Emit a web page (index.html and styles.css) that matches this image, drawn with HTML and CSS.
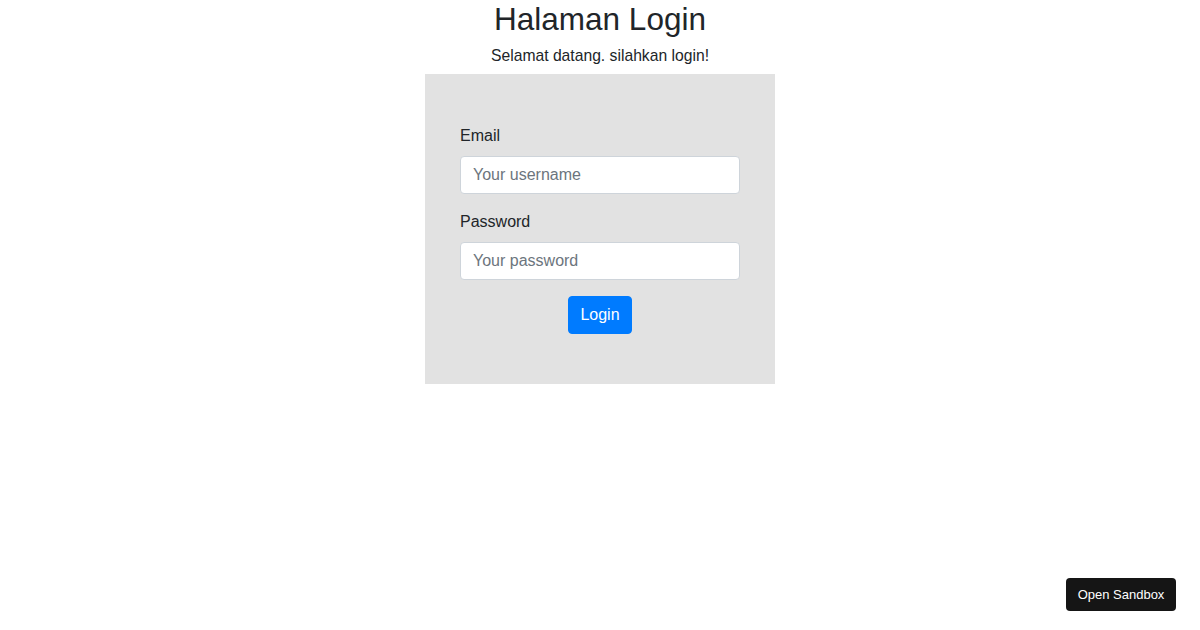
FILE: index.html
```html
<!DOCTYPE html>
<html lang="en">
<head>
  <meta charset="UTF-8" />
  <meta name="viewport" content="width=device-width, initial-scale=1" />
  <title>Halaman Login</title>
  <link rel="stylesheet" href="styles.css">
</head>
<body>
  <div class="login-page">
    <h2 class="login-title">Halaman Login</h2>
    <p class="login-subtitle">Selamat datang. silahkan login!</p>

    <div class="login-box">
      <form>
        <div class="form-group">
          <label for="email">Email</label>
          <input type="text" id="email" class="form-control" placeholder="Your username" />
        </div>
        <div class="form-group">
          <label for="password">Password</label>
          <input type="password" id="password" class="form-control" placeholder="Your password" />
        </div>
        <div class="form-actions">
          <button type="submit" class="btn-login">Login</button>
        </div>
      </form>
    </div>
  </div>

  <a href="#" class="sandbox-btn">Open Sandbox</a>
</body>
</html>
```

FILE: styles.css
```css
* {
  margin: 0;
  padding: 0;
  box-sizing: border-box;
}

body {
  font-family: 'Liberation Sans', Arial, sans-serif;
  font-size: 16px;
  line-height: 1.5;
  color: #212529;
  background-color: #fff;
}

.login-page {
  display: flex;
  flex-direction: column;
  align-items: center;
}

.login-title {
  font-size: 31.5px;
  font-weight: 400;
  line-height: 1.2;
  margin-top: 1px;
  margin-bottom: 5px;
}

.login-subtitle {
  font-size: 15.7px;
  margin-bottom: 7px;
}

.login-box {
  width: 350px;
  background-color: #e2e2e2;
  padding: 50px 35px;
}

.form-group {
  margin-bottom: 16px;
}

.form-group label {
  display: block;
  margin-bottom: 8px;
}

.form-control {
  display: block;
  width: 100%;
  height: 38px;
  padding: 6px 12px;
  font-family: inherit;
  font-size: 16px;
  color: #495057;
  background-color: #fff;
  border: 1px solid #ced4da;
  border-radius: 4px;
}

.form-control::placeholder {
  color: #6c757d;
}

.form-actions {
  text-align: center;
}

.btn-login {
  height: 38px;
  padding: 6px 11px;
  font-family: inherit;
  font-size: 16px;
  line-height: 1.5;
  color: #fff;
  background-color: #007bff;
  border: 1px solid #007bff;
  border-radius: 4px;
  cursor: pointer;
}

.sandbox-btn {
  position: fixed;
  right: 24px;
  bottom: 19px;
  width: 110px;
  height: 33px;
  line-height: 33px;
  text-align: center;
  font-size: 13px;
  color: #fff;
  background-color: #151515;
  border-radius: 4px;
  text-decoration: none;
}
```
